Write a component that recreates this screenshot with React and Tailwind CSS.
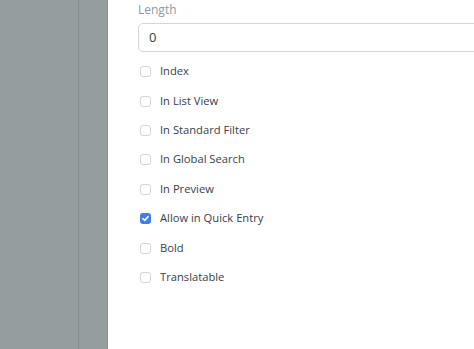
import React from 'react';

const fields = [
  { label: 'Index', checked: false },
  { label: 'In List View', checked: false },
  { label: 'In Standard Filter', checked: false },
  { label: 'In Global Search', checked: false },
  { label: 'In Preview', checked: false },
  { label: 'Allow in Quick Entry', checked: true },
  { label: 'Bold', checked: false },
  { label: 'Translatable', checked: false },
];

function Check({ checked }) {
  if (checked) {
    return (
      <span className="flex h-[11px] w-[11px] items-center justify-center rounded-[3px] bg-[#3f7ee6]">
        <svg viewBox="0 0 12 12" className="h-[9px] w-[9px]" fill="none" stroke="white" strokeWidth="2" strokeLinecap="round" strokeLinejoin="round">
          <path d="M2.5 6.2 L5 8.5 L9.5 3.5" />
        </svg>
      </span>
    );
  }
  return <span className="block h-[11px] w-[11px] rounded-[3px] border border-[#d1d8dd] bg-white" />;
}

export default function App() {
  return (
    <div className="flex h-[349px] w-[474px] overflow-hidden bg-[#959e9e]" style={{ fontFamily: '"Open Sans", "Noto Sans", sans-serif' }}>
      {/* Backdrop */}
      <div className="flex w-[108px] shrink-0">
        <div className="w-[79px] border-r border-[#879090]" />
        <div className="flex-1" />
      </div>

      {/* Sidebar panel */}
      <div className="flex-1 bg-white pl-[30px] shadow-[-1px_0_0_#8a9393]">
        <div className="pt-[2px] text-[12px] leading-[16px] text-[#8d99a6]">Length</div>
        <div className="mt-[5px] flex h-[29px] w-[360px] items-center rounded-[5px] border border-[#d1d8dd] pl-[10px] text-[13px] text-[#36414c]">
          0
        </div>
        <div className="mt-[5px] flex flex-col">
          {fields.map((f) => (
            <div key={f.label} className="flex h-[29.4px] items-center">
              <div className="ml-[2px] w-[20px]">
                <Check checked={f.checked} />
              </div>
              <span className="text-[11.2px] text-[#36414c]">{f.label}</span>
            </div>
          ))}
        </div>
      </div>
    </div>
  );
}
